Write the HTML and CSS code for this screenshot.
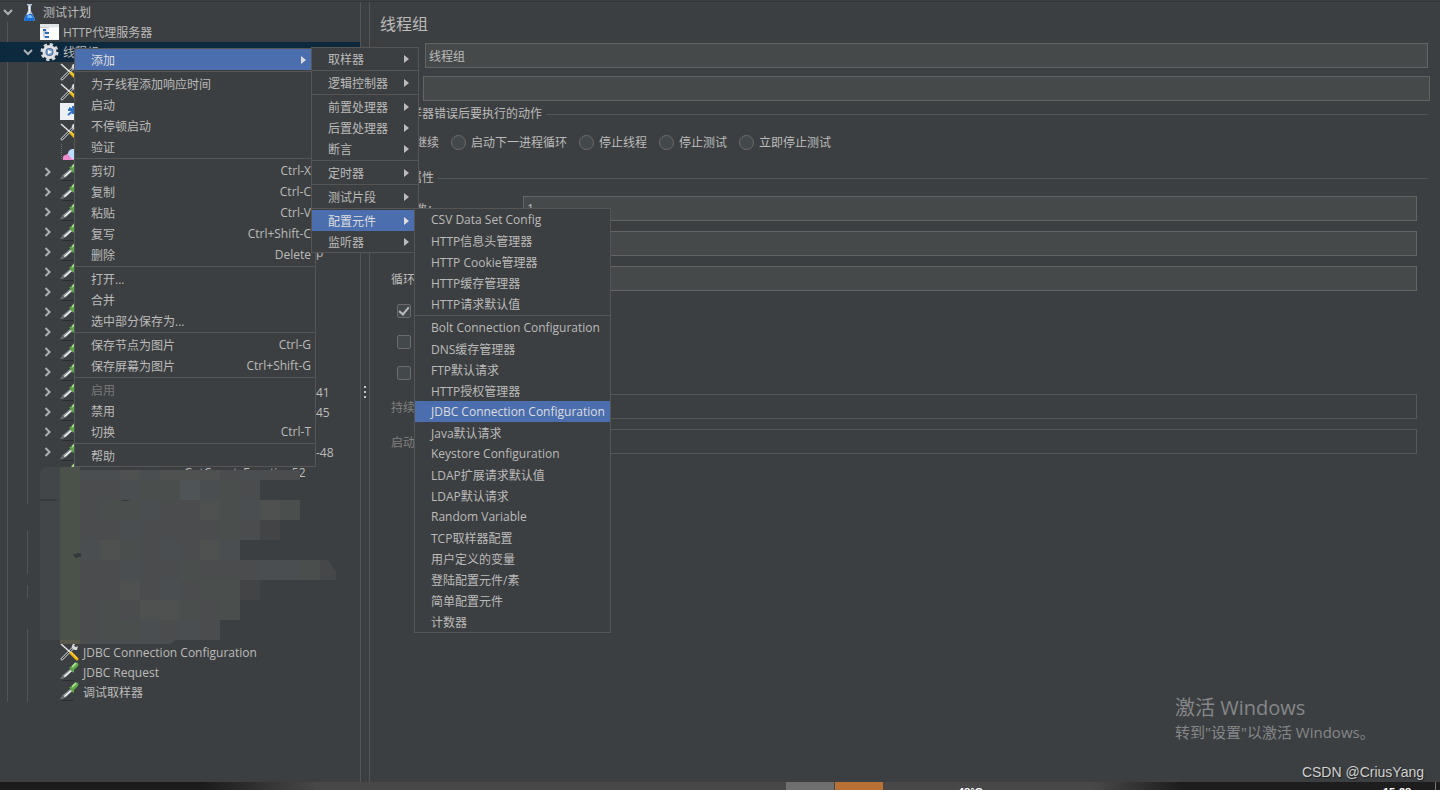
FILE: index.html
```html
<!DOCTYPE html>
<html lang="zh-CN">
<head>
  <meta charset="UTF-8">
  <meta name="viewport" content="width=device-width, initial-scale=1.0">
  <title>线程组</title>
  <link rel="stylesheet" href="styles.css">
</head>
<body>

  <svg class="sprite" aria-hidden="true">
    <symbol id="open" viewBox="0 0 20 20">
      <path d="M4 8l4 4 4-4" fill="none" stroke="#afb1b3" stroke-width="2"/>
    </symbol>
    <symbol id="closed" viewBox="0 0 20 20">
      <path d="M5.500 6l4 4-4 4" fill="none" stroke="#afb1b3" stroke-width="2"/>
    </symbol>
    <symbol id="flask" viewBox="0 0 20 20">
      <path d="M7 2h5v1l-1 1v5l4 8q0 2-2 2H6q-2 0-2-2l4-8V4L7 3z" fill="#b4c4d4"/>
      <path d="M7 12h5l3 5q0 2-2 2H6q-2 0-2-2z" fill="#1c6fd6"/>
      <path d="M9 4h1v6l-2 3H7l2-4z" fill="#f4f7fa"/>
      <path d="M8 13h3l2 3H7z" fill="#6cb8f5"/>
    </symbol>
    <symbol id="server" viewBox="0 0 20 20">
      <path d="M0 2h19v16H0z" fill="#f5f6f7"/>
      <path d="M0 2h19v3H0z" fill="#e1e4e6"/>
      <path d="M0 5h9v1H0z" fill="#c9cdd0"/>
      <path d="M9 6h10v11H9z" fill="#fff"/>
      <path d="M4 8v7M4 10h3M4 15h3" stroke="#8aa9c9" fill="none"/>
      <path d="M3 7h3v2H3zM5 10h4v2H5zM5 14h4v2H5z" fill="#2b6cb3"/>
    </symbol>
    <symbol id="gear" viewBox="0 0 20 20">
      <circle cx="9.500" cy="10" r="7.500" fill="none" stroke="#d5d7d9" stroke-width="3" stroke-dasharray="3.200 2.690"/>
      <circle cx="9.500" cy="10" r="5.500" fill="#4f6f9c" stroke="#e0e1e2" stroke-width="3"/>
      <circle cx="9.500" cy="10" r="3" fill="#7fa3d0"/>
      <path d="M8 8l4 2-4 2z" fill="#fff"/>
    </symbol>
    <symbol id="tools" viewBox="0 0 20 20">
      <path d="M2 17L13 6" stroke="#a3a7a9" stroke-width="3" stroke-linecap="round"/>
      <path d="M2 17L13 6" stroke="#34383a" stroke-width="1"/>
      <path d="M13 2q-2 2-1 4t5 2l1-4-2 1-2-1 1-2z" fill="#d5d7d8"/>
      <path d="M1 2l9 8" stroke="#e4e5e6" stroke-width="1.500"/>
      <path d="M11 11l6 6" stroke="#f2b90c" stroke-width="3" stroke-linecap="round"/>
      <path d="M11 10l6 6" stroke="#ffe05c" stroke-width="1"/>
    </symbol>
    <symbol id="page" viewBox="0 0 20 20">
      <path d="M0 1h18v17H0z" fill="#edf0f4"/>
      <path d="M9 6l5 2-6 5M8 8h5M13 4v8" stroke="#2f73c4" stroke-width="2" fill="none"/>
    </symbol>
    <symbol id="chart" viewBox="0 0 20 20">
      <path d="M1.500 2v16" stroke="#6b6e70" stroke-dasharray="1 1"/>
      <path d="M3 18q-1-5 3-5 2-3 4 0l8 5z" fill="#f08bd0"/>
      <path d="M8 12q0-4 4-5l6 0v10h-6z" fill="#b9dcff"/>
    </symbol>
    <symbol id="dropper" viewBox="0 0 20 20">
      <path d="M2 18.500h12" stroke="#2b2d2f"/>
      <path d="M0 17l3-4 7-6 2 2-6 6-4 2z" fill="#8f9597"/>
      <path d="M4 14l7-6 1 1-7 6z" fill="#f4f5f5"/>
      <path d="M0 17l3-4 1 2-2 2z" fill="#686d6f"/>
      <path d="M9 5l2 0 4-4q2-1 3 0t0 3l-4 4v2l-1 1z" fill="#5fa648"/>
      <path d="M12 5l4-4" stroke="#a6dc90" stroke-width="2"/>
    </symbol>
  </svg>

  <div class="app">
    <!-- Test plan tree -->
    <nav class="tree">
      <div class="row"><svg><use href="#open"/></svg><svg><use href="#flask"/></svg><span>测试计划</span></div>
      <div class="row"><i></i><b></b><svg><use href="#server"/></svg><span>HTTP代理服务器</span></div>
      <div class="row selected"><i></i><svg><use href="#open"/></svg><svg><use href="#gear"/></svg><span>线程组</span></div>
      <div class="row"><i></i><i></i><b></b><svg><use href="#tools"/></svg></div>
      <div class="row"><i></i><i></i><b></b><svg><use href="#tools"/></svg></div>
      <div class="row"><i></i><i></i><b></b><svg><use href="#page"/></svg></div>
      <div class="row"><i></i><i></i><b></b><svg><use href="#tools"/></svg></div>
      <div class="row"><i></i><i></i><b></b><svg><use href="#chart"/></svg></div>
      <div class="row"><i></i><i></i><svg><use href="#closed"/></svg><svg><use href="#dropper"/></svg></div>
      <div class="row"><i></i><i></i><svg><use href="#closed"/></svg><svg><use href="#dropper"/></svg></div>
      <div class="row"><i></i><i></i><svg><use href="#closed"/></svg><svg><use href="#dropper"/></svg></div>
      <div class="row"><i></i><i></i><svg><use href="#closed"/></svg><svg><use href="#dropper"/></svg></div>
      <div class="row"><i></i><i></i><svg><use href="#closed"/></svg><svg><use href="#dropper"/></svg><span class="tail">p</span></div>
      <div class="row"><i></i><i></i><svg><use href="#closed"/></svg><svg><use href="#dropper"/></svg></div>
      <div class="row"><i></i><i></i><svg><use href="#closed"/></svg><svg><use href="#dropper"/></svg></div>
      <div class="row"><i></i><i></i><svg><use href="#closed"/></svg><svg><use href="#dropper"/></svg></div>
      <div class="row"><i></i><i></i><svg><use href="#closed"/></svg><svg><use href="#dropper"/></svg></div>
      <div class="row"><i></i><i></i><svg><use href="#closed"/></svg><svg><use href="#dropper"/></svg></div>
      <div class="row"><i></i><i></i><svg><use href="#closed"/></svg><svg><use href="#dropper"/></svg></div>
      <div class="row"><i></i><i></i><svg><use href="#closed"/></svg><svg><use href="#dropper"/></svg><span class="tail">41</span></div>
      <div class="row"><i></i><i></i><svg><use href="#closed"/></svg><svg><use href="#dropper"/></svg><span class="tail">45</span></div>
      <div class="row"><i></i><i></i><svg><use href="#closed"/></svg><svg><use href="#dropper"/></svg></div>
      <div class="row"><i></i><i></i><svg><use href="#closed"/></svg><svg><use href="#dropper"/></svg><span class="tail">-48</span></div>
      <div class="row"><i></i><i></i><b></b><svg><use href="#dropper"/></svg><span class="name">GetCountsFunction52</span></div>
      <div class="row"><i></i><i></i></div>
      <div class="row"><i></i><i></i></div>
      <div class="row"><i></i><i></i></div>
      <div class="row"><i></i><i></i></div>
      <div class="row"><i></i><i></i></div>
      <div class="row"><i></i><i></i></div>
      <div class="row"><i></i><i></i></div>
      <div class="row"><i></i><i></i></div>
      <div class="row"><i></i><i></i><b></b><svg><use href="#tools"/></svg><span>JDBC Connection Configuration</span></div>
      <div class="row"><i></i><i></i><b></b><svg><use href="#dropper"/></svg><span>JDBC Request</span></div>
      <div class="row"><i></i><i></i><b></b><svg><use href="#dropper"/></svg><span>调试取样器</span></div>

      <!-- Mosaic over the private names -->
      <svg class="mosaic" viewBox="20 460 320 190" shape-rendering="crispEdges">
        <path d="M24 504h8v27h-8zM24 574h8v11h-8zM24 598h8v31h-8z" fill="#3c3f41"/>
        <path d="M44 467h16v173H40V471z" fill="#424649"/>
        <path d="M60 467h20v173H60z" fill="#4b5249"/>
        <path d="M60 640h20v4H60z" fill="#5a584a"/>
        <path d="M80 470h220v10H80zM80 480h180v20H80zM80 500h220v20H80zM80 520h180v20H80zM80 540h160v20H80zM80 560h240v20H80zM80 580h160v20H80zM80 600h160v20H80zM80 620h140v20H80zM80 640h96l-6 4H80z" fill="#4b4c4d"/>
        <path d="M260 520h20v20h-20zM240 580h20v20h-20z" fill="#424445"/>
        <path d="M320 560h8l8 12v8h-16z" fill="#464748"/>
        <path d="M80 470h40v10H80zM140 470h20v10h-20zM120 480h20v20h-20zM200 480h20v20h-20zM140 500h20v20h-20zM240 470h20v10h-20zM240 500h20v20h-20zM120 520h20v20h-20zM80 540h20v20H80zM160 540h20v20h-20zM220 540h20v20h-20zM120 560h20v20h-20zM260 560h40v20h-40zM160 580h20v20h-20zM120 580h20v20h-20zM140 620h20v20h-20zM180 620h20v20h-20z" fill="#4a4e50"/>
        <path d="M140 480h40v20h-40zM100 500h40v20h-40zM220 480h20v40h-20zM280 500h20v20h-20zM220 520h20v20h-20zM120 540h20v20h-20zM180 560h20v20h-20zM300 560h20v20h-20zM200 580h40v20h-40zM100 600h20v20h-20zM180 600h20v20h-20zM220 600h20v20h-20zM100 620h40v20h-40z" fill="#4a4e4d"/>
        <path d="M120 470h20v10h-20zM160 470h60v10h-60zM200 500h20v20h-20zM260 500h20v20h-20zM100 540h20v20h-20zM200 540h20v20h-20zM140 600h40v20h-40zM120 580h20v20h-20z" fill="#4f5050"/>
        <path d="M180 480h20v20h-20z" fill="#4f5456"/>
        <path d="M40 499h16l4 1-8 1H40zM73 554l8-1v4l-6 1zM122 500h7v1h-7z" fill="#363a3c"/>
      </svg>
    </nav>

    <div class="splitter"><svg viewBox="0 0 8 14"><path d="M3 1h2v2H3zM3 6h2v2H3zM3 11h2v2H3z" fill="#c4c6c8"/></svg></div>

    <!-- Thread group form -->
    <main class="panel">
      <h1>线程组</h1>
      <div class="field">
        <label for="name">名称：</label>
        <input class="inset" type="text" id="name" value="线程组">
      </div>
      <div class="field">
        <label for="comment">注释：</label>
        <input type="text" id="comment">
      </div>

      <fieldset class="actions">
        <legend>在取样器错误后要执行的动作</legend>
        <label><input type="radio" name="onError">继续</label>
        <label><input type="radio" name="onError">启动下一进程循环</label>
        <label><input type="radio" name="onError">停止线程</label>
        <label><input type="radio" name="onError">停止测试</label>
        <label><input type="radio" name="onError">立即停止测试</label>
      </fieldset>

      <fieldset class="props">
        <legend>线程属性</legend>
        <div class="prop"><label for="threads">线程数：</label><input type="text" id="threads" value="1"></div>
        <div class="prop"><label for="ramp">时间：</label><input type="text" id="ramp"></div>
        <div class="prop"><label for="loops">循环次数</label><input type="text" id="loops"></div>
        <div class="checks">
          <label><input type="checkbox" checked></label>
          <label><input type="checkbox"></label>
          <label><input type="checkbox"></label>
        </div>
        <div class="prop off"><label for="duration">持续时间</label><input type="text" id="duration" disabled></div>
        <div class="prop off"><label for="delay">启动延迟</label><input type="text" id="delay" disabled></div>
      </fieldset>
    </main>
  </div>

  <footer class="taskbar">
    <span class="task gray"></span>
    <span class="task orange"></span>
    <span class="temp">48°C</span>
    <span class="clock">15:38</span>
    <span class="desktop"></span>
  </footer>

  <!-- Context menus -->
  <div class="menu menu-main">
    <button class="active arrow">添加</button>
    <hr>
    <button>为子线程添加响应时间</button>
    <button>启动</button>
    <button>不停顿启动</button>
    <button>验证</button>
    <hr>
    <button>剪切<kbd>Ctrl-X</kbd></button>
    <button>复制<kbd>Ctrl-C</kbd></button>
    <button>粘贴<kbd>Ctrl-V</kbd></button>
    <button>复写<kbd>Ctrl+Shift-C</kbd></button>
    <button>删除<kbd>Delete</kbd></button>
    <hr>
    <button>打开...</button>
    <button>合并</button>
    <button>选中部分保存为...</button>
    <hr>
    <button>保存节点为图片<kbd>Ctrl-G</kbd></button>
    <button>保存屏幕为图片<kbd>Ctrl+Shift-G</kbd></button>
    <hr>
    <button disabled>启用</button>
    <button>禁用</button>
    <button>切换<kbd>Ctrl-T</kbd></button>
    <hr>
    <button>帮助</button>
  </div>

  <div class="menu menu-add">
    <button class="arrow">取样器</button>
    <hr>
    <button class="arrow">逻辑控制器</button>
    <hr>
    <button class="arrow">前置处理器</button>
    <button class="arrow">后置处理器</button>
    <button class="arrow">断言</button>
    <hr>
    <button class="arrow">定时器</button>
    <hr>
    <button class="arrow">测试片段</button>
    <hr>
    <button class="active arrow">配置元件</button>
    <button class="arrow">监听器</button>
  </div>

  <div class="menu menu-config">
    <button>CSV Data Set Config</button>
    <button>HTTP信息头管理器</button>
    <button>HTTP Cookie管理器</button>
    <button>HTTP缓存管理器</button>
    <button>HTTP请求默认值</button>
    <hr>
    <button>Bolt Connection Configuration</button>
    <button>DNS缓存管理器</button>
    <button>FTP默认请求</button>
    <button>HTTP授权管理器</button>
    <button class="active">JDBC Connection Configuration</button>
    <button>Java默认请求</button>
    <button>Keystore Configuration</button>
    <button>LDAP扩展请求默认值</button>
    <button>LDAP默认请求</button>
    <button>Random Variable</button>
    <button>TCP取样器配置</button>
    <button>用户定义的变量</button>
    <button>登陆配置元件/素</button>
    <button>简单配置元件</button>
    <button>计数器</button>
  </div>

  <div class="activate">
    <p class="big">激活 Windows</p>
    <p>转到"设置"以激活 Windows。</p>
  </div>
  <div class="credit">CSDN @CriusYang</div>

</body>
</html>
```
FILE: styles.css
```css
* {
  box-sizing: border-box;
}
body {
  margin: 0;
  height: 100vh;
  display: flex;
  flex-direction: column;
  position: relative;
  overflow: hidden;
  background: #3c3f41;
  color: #bbbbbb;
  font-family: "Open Sans", "Noto Sans CJK SC", sans-serif;
  font-size: 12px;
}
input, button, kbd {
  font: inherit;
  color: inherit;
}
.sprite {
  position: absolute;
  width: 0;
  height: 0;
}
.app {
  flex: 1;
  min-height: 0;
  display: flex;
  margin-top: 1px;
  border-top: 1px solid #323537;
}

/* tree */
.tree {
  position: relative;
  width: 361px;
  flex-shrink: 0;
  border-right: 1px solid #555555;
  overflow: hidden;
}
.row {
  display: flex;
  height: 20px;
  line-height: 22px;
  white-space: nowrap;
}
.row i {
  width: 13px;
  margin-left: 7px;
  border-left: 1px solid #515558;
}
.row b {
  width: 20px;
}
.row svg {
  width: 20px;
  height: 20px;
}
.row span {
  padding-left: 3px;
}
.row .tail {
  padding-left: 236px;
}
.row .name {
  padding-left: 104px;
}
.selected {
  background: #0d293e;
}
.selected i {
  border-color: transparent;
}
.mosaic {
  position: absolute;
  left: 20px;
  top: 458px;
  width: 320px;
  height: 190px;
}
.splitter {
  width: 8px;
  display: flex;
  align-items: center;
}
.splitter svg {
  width: 8px;
  height: 14px;
}

/* form */
.panel {
  flex: 1;
  min-width: 0;
  border-left: 1px solid #555555;
  padding: 10px 10px 0;
}
h1 {
  margin: 0 0 7px;
  font-size: 16px;
  font-weight: normal;
  line-height: 24px;
}
.field {
  display: flex;
  align-items: center;
  margin-bottom: 8px;
}
.field + .field {
  margin-bottom: 3px;
}
.field label {
  width: 43px;
}
input[type="text"] {
  flex: 1;
  min-width: 0;
  height: 25px;
  padding: 0 3px;
  border: 1px solid #646464;
  background: #45494a;
  outline: none;
}
.inset {
  margin: 0 2px;
}
fieldset {
  margin: 0 2px 0 0;
  border: 0;
  border-top: 1px solid #515658;
}
legend {
  padding: 0 4px 0 0;
  line-height: 20px;
}
.actions {
  display: flex;
  gap: 12px;
  padding: 8px 0 0 6px;
  margin-bottom: 16px;
}
.actions label {
  display: flex;
  align-items: center;
  gap: 5px;
  height: 20px;
}
.actions label:first-of-type {
  margin-left: 9px;
}
input[type="radio"],
input[type="checkbox"] {
  appearance: none;
  width: 15px;
  height: 15px;
  margin: 0;
  border: 1px solid #6b6b6b;
  background: #43494a;
}
input[type="checkbox"] {
  width: 14px;
  height: 14px;
  border-radius: 2px;
}
input[type="radio"] {
  border-radius: 50%;
}
input[type="checkbox"]:checked {
  display: flex;
  align-items: center;
  justify-content: center;
}
input[type="checkbox"]:checked::after {
  content: "";
  width: 4px;
  height: 8px;
  margin-bottom: 2px;
  border: solid #bbbbbb;
  border-width: 0 2px 2px 0;
  transform: rotate(40deg);
}
.props {
  padding: 8px 11px 0 6px;
}
.prop {
  display: flex;
  align-items: center;
  margin: 0 0 10px 5px;
}
.prop label {
  width: 132px;
}
.checks {
  margin: -6px 0 6px 11px;
}
.checks label {
  display: flex;
  align-items: center;
  height: 31px;
}
.off {
  color: #808080;
}
.off input[type="text"] {
  background: #3c3f41;
  border-color: #56595b;
}

/* menus */
.menu {
  position: absolute;
  display: flex;
  flex-direction: column;
  background: #3c3f41;
  border: 1px solid #555555;
}
.menu button {
  display: flex;
  align-items: center;
  justify-content: space-between;
  height: 21px;
  padding: 0 4px 0 16px;
  border: 0;
  background: none;
  white-space: nowrap;
}
.menu button.active {
  background: #4b6eaf;
  color: #dddddd;
}
.menu button:disabled {
  color: #777777;
}
.menu hr {
  width: 100%;
  height: 1px;
  margin: 1px 0;
  border: 0;
  background: #555555;
}
.menu .arrow {
  padding-right: 9px;
}
.arrow::after {
  content: "";
  border: solid transparent;
  border-width: 4px 0 4px 5px;
  border-left-color: #bbbbbb;
}
.active.arrow::after {
  border-left-color: #dddddd;
}
.menu-main {
  left: 74px;
  top: 48px;
  width: 242px;
}
.menu-add {
  left: 311px;
  top: 47px;
  width: 108px;
}
.menu-config {
  left: 414px;
  top: 208px;
  width: 197px;
}

/* desktop overlays */
.activate {
  position: absolute;
  right: 65px;
  bottom: 46px;
  width: 200px;
  color: #85878a;
  font-size: 15px;
  line-height: 24px;
  white-space: nowrap;
}
.activate p {
  margin: 0;
}
.activate .big {
  font-size: 20px;
}
.credit {
  position: absolute;
  right: 16px;
  bottom: 8px;
  font-family: "Liberation Sans", sans-serif;
  font-size: 14px;
  line-height: 20px;
  color: #d0d1d1;
  text-shadow: 1px 1px 1px #1e1f20;
}

/* taskbar */
.taskbar {
  display: flex;
  height: 8px;
  overflow: hidden;
  background: linear-gradient(90deg, #1b1b1b 14%, #484848 22%, #484848 76%, #1d1d1d 82%);
  color: #ffffff;
  font-family: "Liberation Sans", sans-serif;
  font-size: 11px;
  font-weight: bold;
  line-height: 20px;
}
.task {
  width: 48px;
  margin-right: 1px;
}
.gray {
  margin-left: auto;
  background: #6f6f6f;
}
.orange {
  background: #b87035;
}
.temp {
  margin-left: 74px;
  width: 425px;
}
.clock {
  width: 52px;
}
.desktop {
  width: 5px;
  border-left: 1px solid #777777;
}
```
